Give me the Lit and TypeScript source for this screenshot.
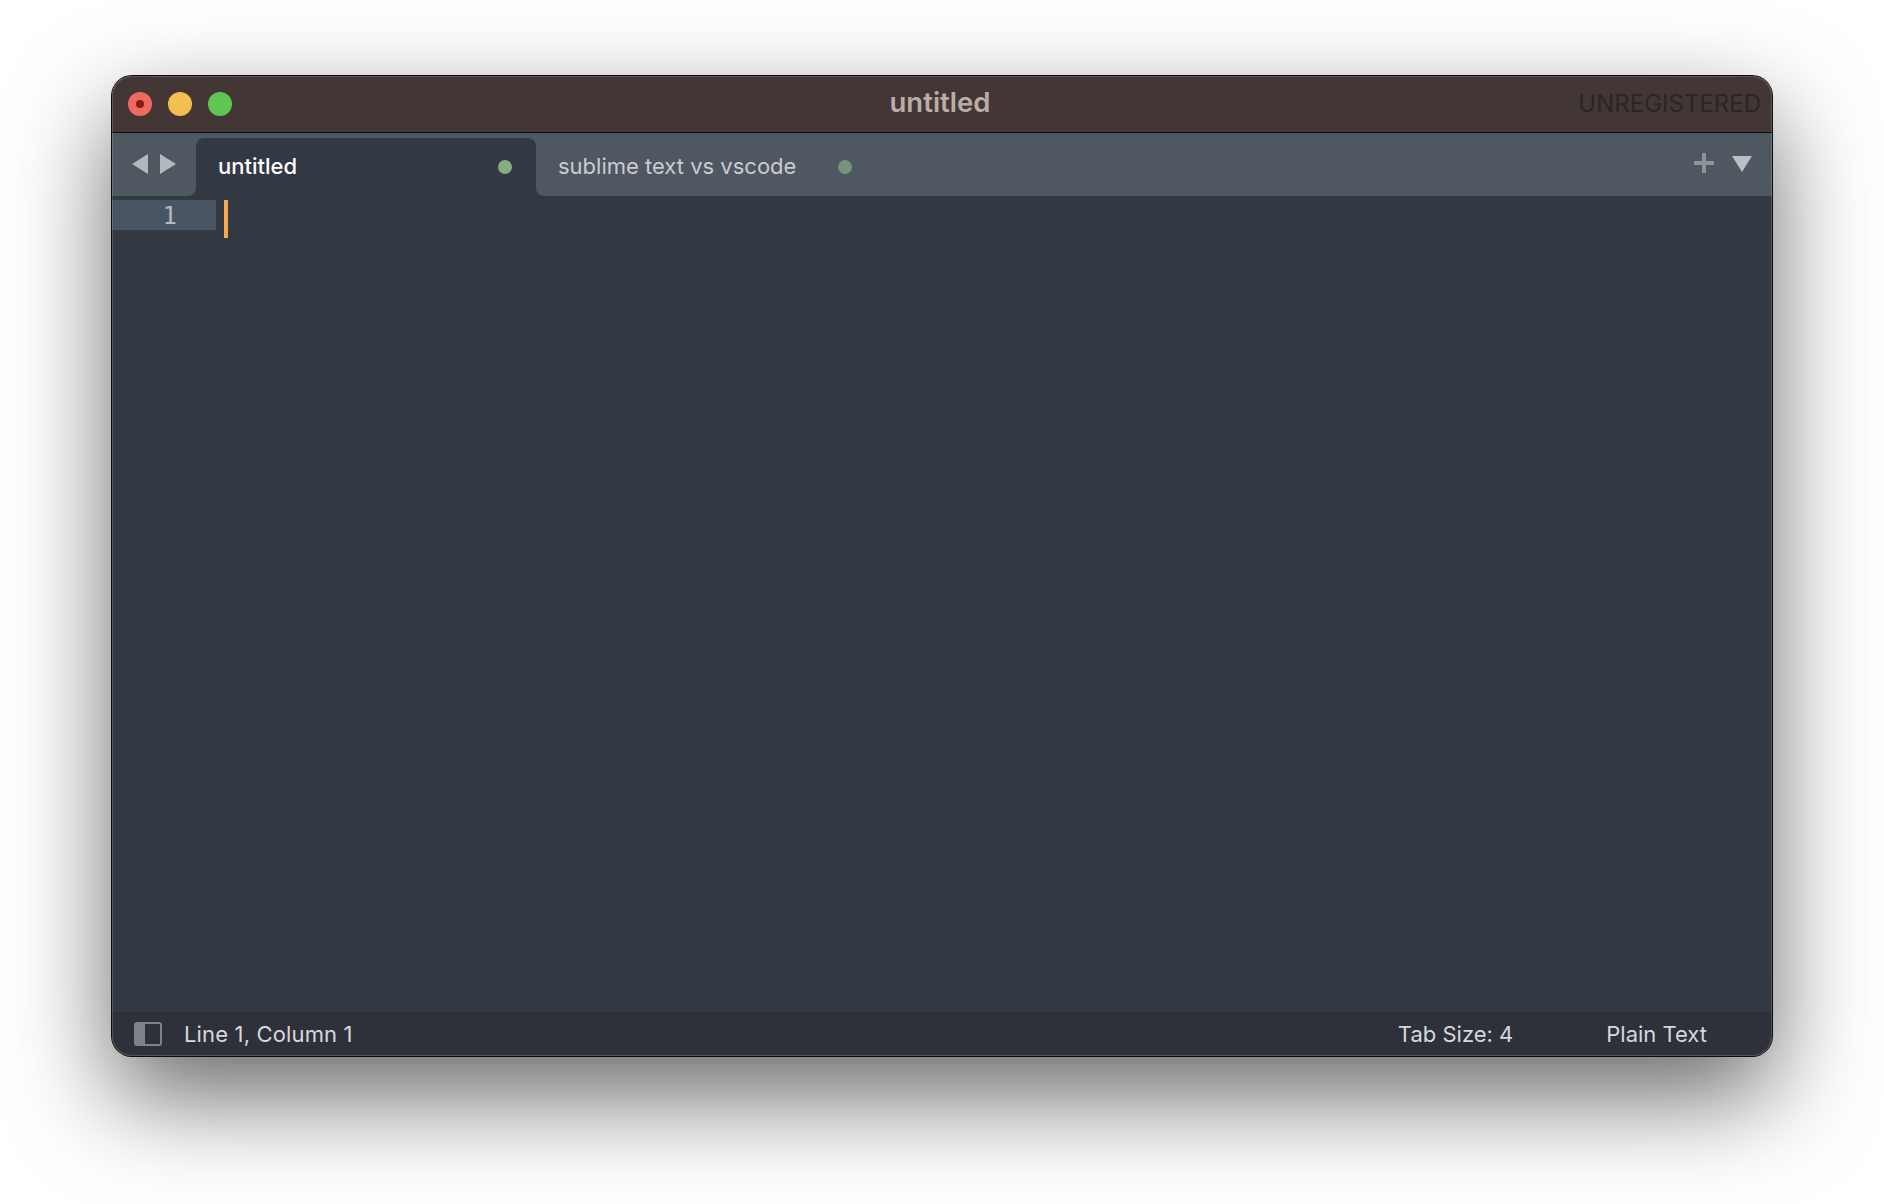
import { LitElement, html, css } from "lit";
import { customElement } from "lit/decorators.js";

@customElement("app-root")
export class AppRoot extends LitElement {
  static styles = css`
    :host {
      display: block;
      box-sizing: border-box;
      height: 1204px;
      padding: 76px 112px 0;
      background: #fff;
      font-family: Inter, "Noto Sans", sans-serif;
      overflow: hidden;
    }
    .window {
      position: relative;
      width: 1660px;
      height: 980px;
      border-radius: 20px;
      display: flex;
      flex-direction: column;
      overflow: hidden;
      background: #323943;
    }
    .shadow {
      width: 1660px;
      height: 980px;
      border-radius: 20px;
      box-shadow: 0 0 0 1px #0c0c0c, 0 40px 100px rgba(0, 0, 0, 0.6);
    }
    .window::after {
      content: "";
      position: absolute;
      inset: 0;
      border-radius: 20px;
      box-shadow: inset 0 0 0 1px rgba(255, 255, 255, 0.16);
      pointer-events: none;
    }
    .title {
      flex: none;
      height: 56px;
      background: #433735;
      border-bottom: 1px solid #0d0b0b;
      box-sizing: content-box;
      position: relative;
      display: flex;
      align-items: flex-start;
      padding: 0 12px 0 16px;
    }
    .lights { display: flex; gap: 16px; position: absolute; left: 16px; top: 16px; }
    .light { width: 24px; height: 24px; border-radius: 50%; display: flex; align-items: center; justify-content: center; }
    .red { background: #ee6a5f; }
    .red i { width: 8px; height: 8px; border-radius: 50%; background: #8c1a10; display: block; }
    .yellow { background: #f5bf4f; }
    .green { background: #61c554; }
    .name {
      flex: 1;
      text-align: center;
      font-size: 27.5px;
      line-height: 53px;
      font-weight: 600;
      color: #b9adaa;
      margin-left: -8px;
    }
    .reg {
      position: absolute;
      right: 11px;
      top: 13px;
      font-size: 24px;
      line-height: 30px;
      color: #2b2523;
    }
    .tabs { flex: none; height: 63px; display: flex; }
    .nav {
      width: 84px;
      background: #4f5761;
      border-bottom-right-radius: 8px;
      display: flex;
      gap: 12px;
      padding: 21px 0 0 20px;
      box-sizing: border-box;
    }
    .nav svg { display: block; }
    .active-wrap { width: 340px; background: #4f5761; padding-top: 5px; box-sizing: border-box; }
    .active {
      height: 58px;
      box-sizing: border-box;
      background: #323943;
      border-radius: 8px 8px 0 0;
      display: flex;
      align-items: center;
      padding: 0 0 0 22px;
      color: #fff;
      font-size: 22px;
    }
    .active .label { flex: 1; margin-top: -2px; font-weight: 450; }
    .dot { width: 14px; height: 14px; border-radius: 50%; display: block; }
    .active .dot { background: #84ad80; margin-right: 24px; }
    .rest {
      flex: 1;
      background: #4f5761;
      border-bottom-left-radius: 8px;
      display: flex;
      align-items: center;
      padding: 5px 20px 0 22px;
      color: #c9ccd0;
      font-size: 22px;
    }
    .rest .text { margin-top: -2px; }
    .rest .dot { background: #769378; margin-left: 42px; }
    .rest .spacer { flex: 1; }
    .rest svg { display: block; }
    .plus { margin-right: 18px; margin-top: -9px; }
    .drop { margin-top: -7px; }
    .editor { flex: 1; display: flex; align-items: flex-start; padding-top: 4px; }
    .gutter {
      width: 104px;
      height: 30px;
      box-sizing: border-box;
      background: #4a5563;
      color: #b0b8c6;
      font-family: "DejaVu Sans Mono", monospace;
      font-size: 24px;
      line-height: 32px;
      text-align: right;
      padding-right: 39px;
    }
    .caret { width: 4px; height: 38px; background: #f7a94f; margin-left: 8px; }
    .status {
      flex: none;
      height: 44px;
      background: #2e3139;
      display: flex;
      align-items: center;
      color: #d6d8db;
      font-size: 22px;
      padding: 0 65px 0 22px;
      box-sizing: border-box;
    }
    .toggle {
      width: 28px;
      height: 24px;
      box-sizing: border-box;
      border: 2px solid #7f8289;
      border-radius: 3px;
      margin-right: 22px;
      display: flex;
    }
    .toggle i { width: 9px; background: #7f8289; display: block; }
    .line { letter-spacing: 0.15px; }
    .grow { flex: 1; }
    .plain { margin-left: 93px; }
  `;

  render() {
    return html`
      <div class="shadow">
        <div class="window">
          <div class="title">
            <div class="lights">
              <span class="light red"><i></i></span>
              <span class="light yellow"></span>
              <span class="light green"></span>
            </div>
            <div class="name">untitled</div>
            <div class="reg">UNREGISTERED</div>
          </div>
          <div class="tabs">
            <div class="nav">
              <svg width="16" height="20" viewBox="0 0 16 20"><path d="M16 0V20L0 10Z" fill="#b4b8bd"/></svg>
              <svg width="16" height="20" viewBox="0 0 16 20"><path d="M0 0V20L16 10Z" fill="#b4b8bd"/></svg>
            </div>
            <div class="active-wrap">
              <div class="active"><span class="label">untitled</span><span class="dot"></span></div>
            </div>
            <div class="rest">
              <span class="text">sublime text vs vscode</span>
              <span class="dot"></span>
              <span class="spacer"></span>
              <svg class="plus" width="20" height="20" viewBox="0 0 20 20"><path d="M8 0h4v8h8v4h-8v8H8v-8H0V8h8Z" fill="#8e939b"/></svg>
              <svg class="drop" width="20" height="16" viewBox="0 0 20 16"><path d="M0 0H20L10 16Z" fill="#bbbec3"/></svg>
            </div>
          </div>
          <div class="editor">
            <div class="gutter">1</div>
            <div class="caret"></div>
          </div>
          <div class="status">
            <div class="toggle"><i></i></div>
            <span class="line">Line 1, Column 1</span>
            <span class="grow"></span>
            <span>Tab Size: 4</span>
            <span class="plain">Plain Text</span>
          </div>
        </div>
      </div>
    `;
  }
}
